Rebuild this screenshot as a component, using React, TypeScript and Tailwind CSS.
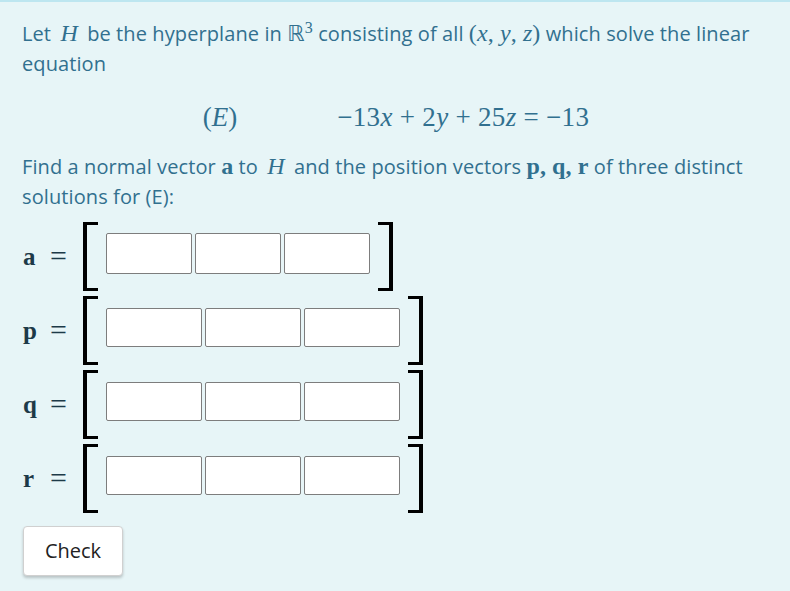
const sans = { fontFamily: '"Open Sans", "Noto Sans", sans-serif' };

function Bracket({ side, h }: { side: 'l' | 'r'; h: string }) {
  return (
    <div
      className={`w-[15px] ${h} shrink-0 border-y-[3px] border-black ${
        side === 'l' ? 'border-l-[4px]' : 'border-r-[4px]'
      }`}
    />
  );
}

function Box({ w, h }: { w: string; h: string }) {
  return <div className={`${w} ${h} bg-white border border-[#7d7d7d] rounded-[2px]`} />;
}

function VectorRow({ name, wide }: { name: string; wide: boolean }) {
  const w = wide ? 'w-[96px]' : 'w-[86px]';
  const h = wide ? 'h-[39px]' : 'h-[41px]';
  return (
    <div className="flex items-center h-[74px]">
      <div className="w-[61px] pl-[1px] flex items-center font-['Liberation_Serif',serif] text-[#1d3a48] leading-none">
        <span className="w-[27px] font-bold text-[25px]">{name}</span>
        <span className="text-[30px]">=</span>
      </div>
      <Bracket side="l" h="h-[69px]" />
      <div className="flex gap-[3px] px-[8px] pb-[6px]">
        <Box w={w} h={h} />
        <Box w={w} h={h} />
        <Box w={w} h={h} />
      </div>
      <Bracket side="r" h="h-[69px]" />
    </div>
  );
}

export default function App() {
  const mi = "font-['Liberation_Serif',serif] italic text-[24px] leading-none mx-[4px]";
  return (
    <div className="w-[790px] h-[591px] bg-[#e7f5f7] border-t-2 border-[#bde6f0] text-[#31708f]" style={sans}>
      <div className="pl-[22px] pr-[20px] pt-[17px]">
        <p className="text-[20px] leading-[30px] tracking-[0.1px]">
          Let <span className={mi}>H</span> be the hyperplane in{' '}
          <span className="font-['DejaVu_Sans',sans-serif] text-[22px] leading-none">ℝ</span>
          <sup className="font-['Liberation_Serif',serif] text-[16px] leading-none">3</sup> consisting of all{' '}
          <span className="font-['Liberation_Serif',serif] text-[24px] leading-none">
            (<i>x</i>, <i>y</i>, <i>z</i>)
          </span>{' '}
          which solve the linear equation
        </p>

        <div className="flex justify-center gap-[100px] mt-[23px] mb-[20px] font-['Liberation_Serif',serif] text-[27px] leading-[30px]">
          <span>
            (<i>E</i>)
          </span>
          <span className="tracking-[0.3px]">
            −13<i>x</i> + 2<i>y</i> + 25<i>z</i> = −13
          </span>
        </div>

        <p className="text-[20px] leading-[30px] tracking-[0.1px]">
          Find a normal vector{' '}
          <b className="font-['Liberation_Serif',serif] text-[24px] leading-none">a</b> to{' '}
          <span className={mi}>H</span> and the position vectors{' '}
          <b className="font-['Liberation_Serif',serif] text-[24px] leading-none">p, q, r</b> of three distinct
          solutions for (E):
        </p>

        <div className="mt-[7px] flex flex-col">
          <VectorRow name="a" wide={false} />
          <VectorRow name="p" wide />
          <VectorRow name="q" wide />
          <VectorRow name="r" wide />
        </div>

        <button className="mt-[11px] ml-[1px] w-[100px] h-[50px] bg-white border border-[#d0d0d0] rounded-[4px] shadow-[0_2px_3px_rgba(0,0,0,0.2)] text-[20px] text-[#222]">
          Check
        </button>
      </div>
    </div>
  );
}
